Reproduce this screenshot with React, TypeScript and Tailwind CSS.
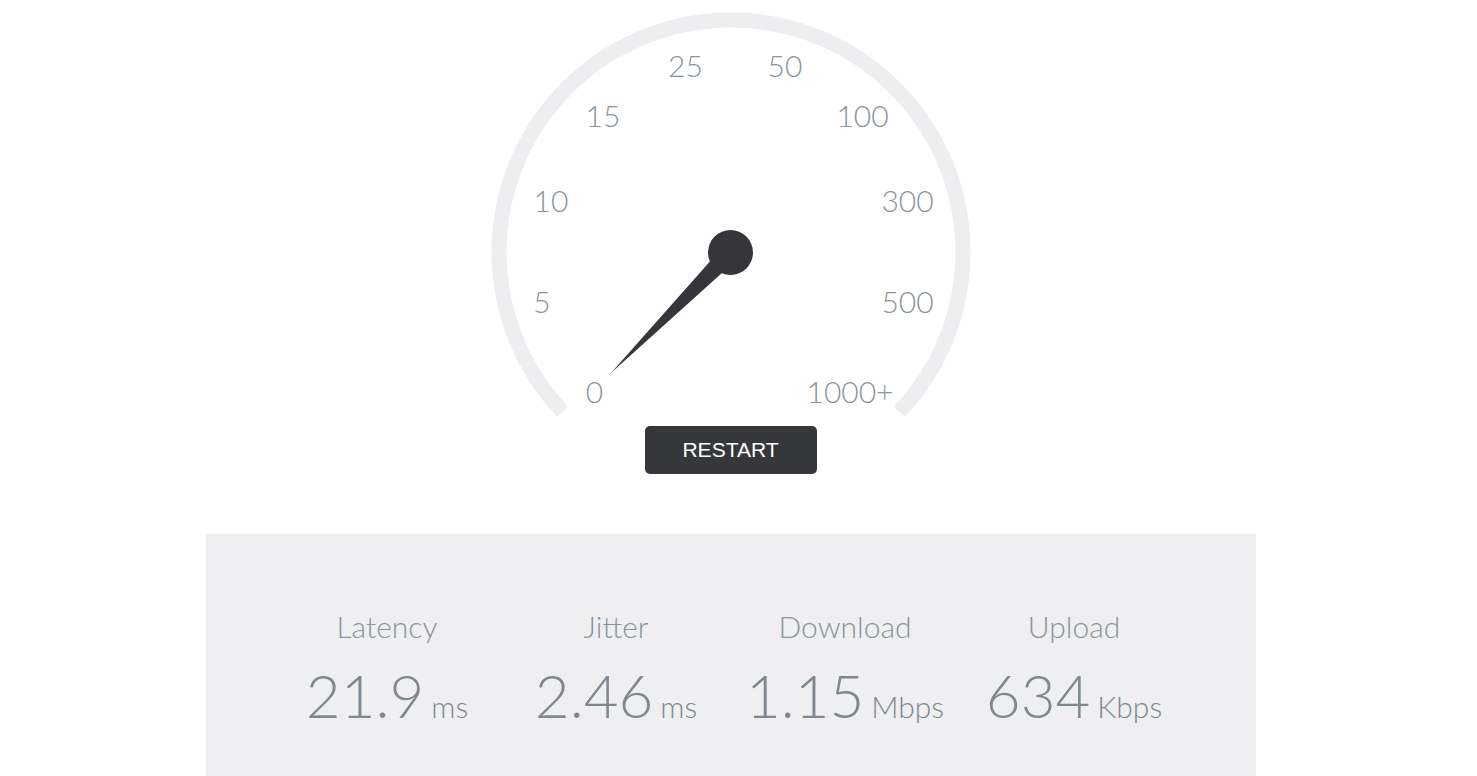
import React from "react";

const labels: { t: string; x: number; y: number }[] = [
  { t: "0", x: 103.5, y: 403 },
  { t: "5", x: 51, y: 313 },
  { t: "10", x: 60, y: 212 },
  { t: "15", x: 112, y: 127 },
  { t: "25", x: 194.5, y: 77 },
  { t: "50", x: 294, y: 77 },
  { t: "100", x: 371.5, y: 127 },
  { t: "300", x: 416.5, y: 212 },
  { t: "500", x: 416.5, y: 313 },
  { t: "1000+", x: 359, y: 403 },
];

const stats = [
  { label: "Latency", value: "21.9", unit: "ms" },
  { label: "Jitter", value: "2.46", unit: "ms" },
  { label: "Download", value: "1.15", unit: "Mbps" },
  { label: "Upload", value: "634", unit: "Kbps" },
];

function Gauge() {
  const cx = 240;
  const cy = 252;
  const r = 232;
  const a = (43.5 * Math.PI) / 180;
  const lx = cx - r * Math.cos(a);
  const ly = cy + r * Math.sin(a);
  const rx = cx + r * Math.cos(a);
  const tipX = 120;
  const tipY = 373;
  const dx = tipX - cx;
  const dy = tipY - cy;
  const len = Math.hypot(dx, dy);
  const px = -dy / len;
  const py = dx / len;
  const hw = 9.5;
  const needle = `${cx + px * hw},${cy + py * hw} ${tipX},${tipY} ${cx - px * hw},${cy - py * hw}`;
  return (
    <svg width={480} height={420} viewBox="0 0 480 420" className="block">
      <path
        d={`M ${lx} ${ly} A ${r} ${r} 0 1 1 ${rx} ${ly}`}
        fill="none"
        stroke="#eeedf0"
        strokeWidth={15}
      />
      {labels.map((l) => (
        <text
          key={l.t}
          x={l.x}
          y={l.y}
          textAnchor="middle"
          fill="#8a949c"
          fontSize={30}
          fontWeight={300}
          fontFamily="Lato, 'Open Sans', sans-serif"
        >
          {l.t}
        </text>
      ))}
      <polygon points={needle} fill="#36363a" />
      <circle cx={cx - 0.5} cy={cy + 0.5} r={22.5} fill="#36363a" />
    </svg>
  );
}

export default function App() {
  return (
    <div className="w-full h-[776px] overflow-hidden bg-white pr-[16px] flex flex-col items-center font-['Lato',sans-serif] font-light">
      <Gauge />
      <button className="mt-[6px] w-[172px] h-[48px] rounded-[5px] bg-[#36373b] text-white text-[21px] font-normal font-['Liberation_Sans',Arial,sans-serif] flex items-center justify-center">
        RESTART
      </button>
      <div className="mt-[60px] w-[1050px] h-[242px] bg-[#efeef1] shrink-0">
        <div className="grid grid-cols-4 w-[916px] mx-auto pt-[75px]">
          {stats.map((s) => (
            <div key={s.label} className="flex flex-col items-center">
              <div className="text-[30px] leading-[34px] text-[#8a949c]">{s.label}</div>
              <div className="mt-[22px] flex items-baseline justify-center text-[#7d8891]">
                <span className="text-[60px] leading-[60px]">{s.value}</span>
                <span className="ml-[7px] text-[30px] leading-[60px]">{s.unit}</span>
              </div>
            </div>
          ))}
        </div>
      </div>
    </div>
  );
}
